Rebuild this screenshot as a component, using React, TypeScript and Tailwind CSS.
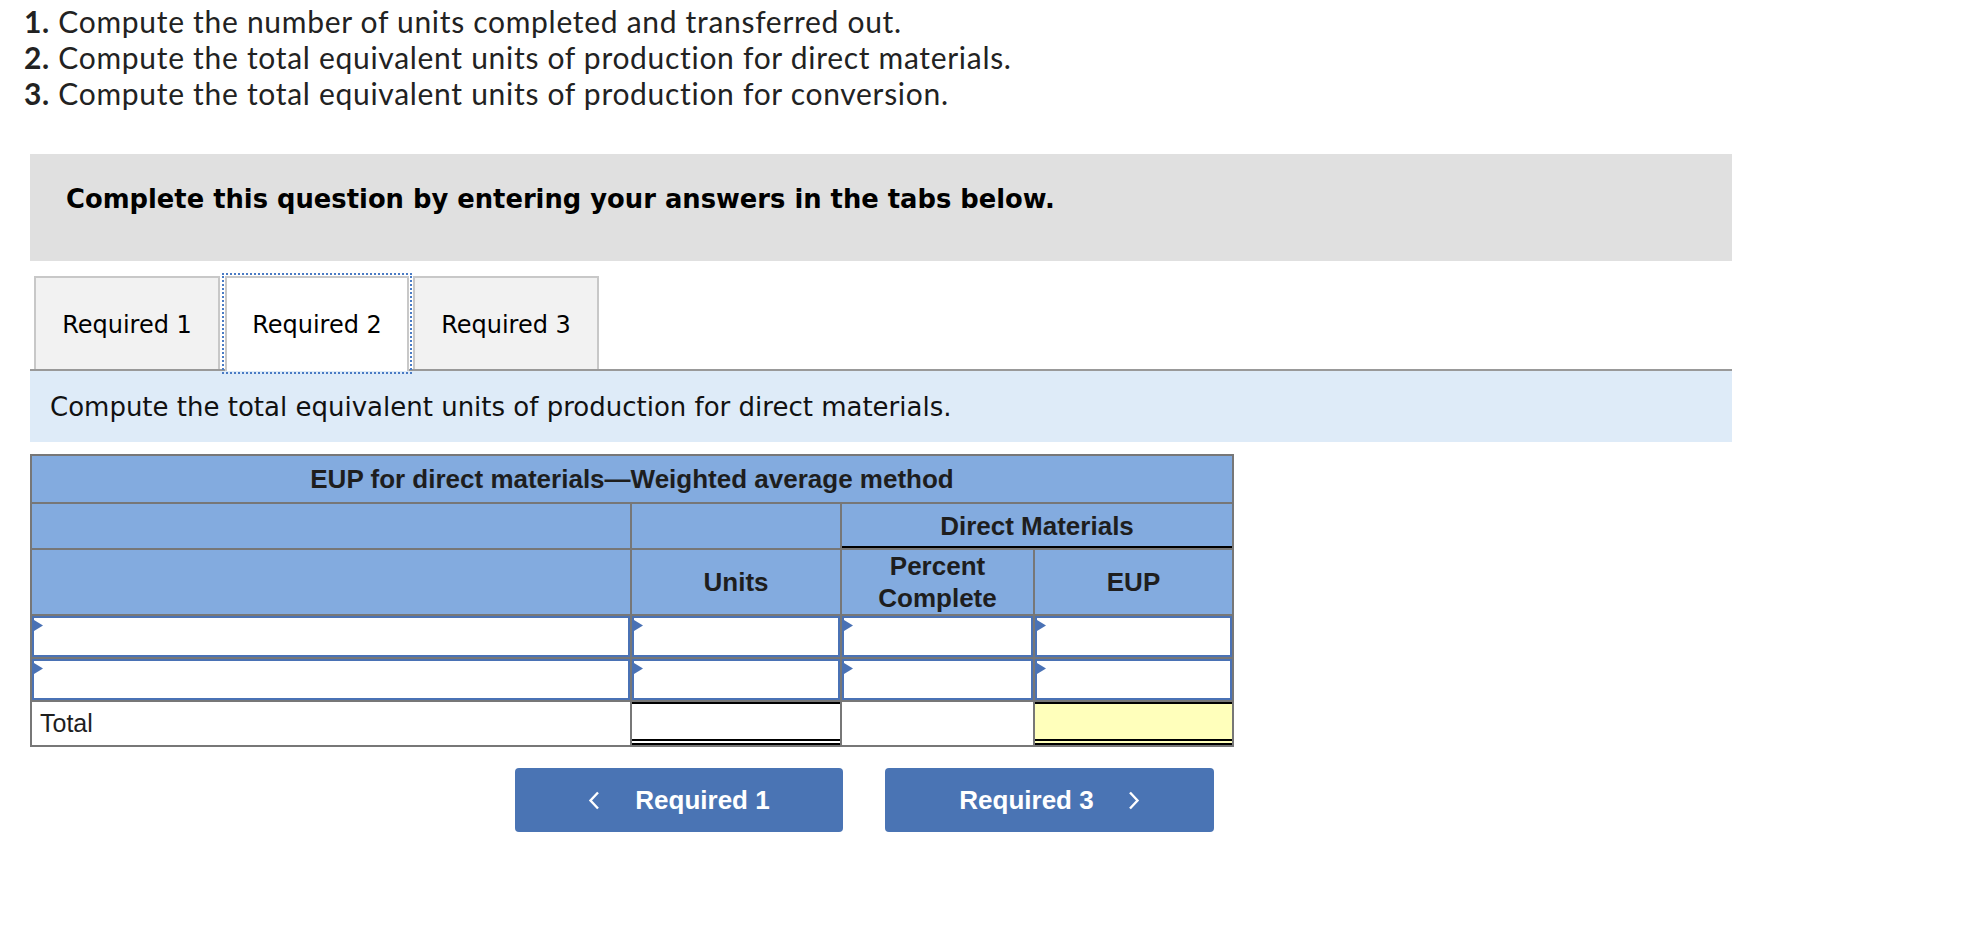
import React from "react";

const blue = "bg-[#83abdf]";

function Tri() {
  return (
    <svg className="absolute left-0 top-[2px]" width="9" height="11" viewBox="0 0 9 11">
      <polygon points="0,0 9,5.5 0,11" fill="#4a72b5" />
    </svg>
  );
}

function InputCell() {
  return (
    <div className="relative h-[41px] bg-white border-2 border-[#4a72b5]">
      <Tri />
    </div>
  );
}

function Chevron({ dir }: { dir: "left" | "right" }) {
  return (
    <svg width="12" height="19" viewBox="0 0 12 19" className="shrink-0">
      {dir === "left" ? (
        <polyline points="10,1.5 2.5,9.5 10,17.5" fill="none" stroke="white" strokeWidth="2.4" />
      ) : (
        <polyline points="2,1.5 9.5,9.5 2,17.5" fill="none" stroke="white" strokeWidth="2.4" />
      )}
    </svg>
  );
}

export default function App() {
  return (
    <div className="min-h-[928px] w-[1968px] bg-white">
      <div className="pt-[3px] pl-[24px] font-['Lato',sans-serif] text-[30px] leading-[36px] tracking-[0.7px] text-[#222]">
        <div>
          <span className="font-bold">1.</span> Compute the number of units completed and transferred out.
        </div>
        <div>
          <span className="font-bold">2.</span> Compute the total equivalent units of production for direct materials.
        </div>
        <div>
          <span className="font-bold">3.</span> Compute the total equivalent units of production for conversion.
        </div>
      </div>

      <div className="ml-[30px] w-[1702px]">
        <div className="mt-[43px] h-[107px] bg-[#e0e0e0] flex items-center pl-[36px] pb-[16px]">
          <span className="font-['DejaVu_Sans',sans-serif] font-bold text-[25.8px] text-black">
            Complete this question by entering your answers in the tabs below.
          </span>
        </div>

        <div className="mt-[15px] flex items-end pl-[4px] border-b-2 border-[#999] h-[95px] font-['DejaVu_Sans',sans-serif] text-[24px] text-black">
          <div className="w-[186px] h-[93px] bg-[#f2f2f2] border-2 border-b-0 border-[#c8c8c8] flex items-center justify-center pt-[3px]">
            Required 1
          </div>
          <div className="ml-[5px] w-[184px] -mb-[2px] h-[95px] bg-white border-2 border-b-0 border-[#c8c8c8] outline-2 outline-dotted outline-[#4a7bc4] outline-offset-[1px] flex items-center justify-center pt-[1px] relative z-10">
            Required 2
          </div>
          <div className="ml-[4px] w-[186px] h-[93px] bg-[#f2f2f2] border-2 border-b-0 border-[#c8c8c8] flex items-center justify-center pt-[3px]">
            Required 3
          </div>
        </div>

        <div className="h-[71px] bg-[#deebf8] flex items-center pl-[20px] pt-[2px] font-['DejaVu_Sans',sans-serif] text-[26px] text-[#111]">
          Compute the total equivalent units of production for direct materials.
        </div>

        <div className="mt-[12px] w-[1204px] grid grid-cols-[598px_208px_191px_197px] gap-[2px] bg-[#777] p-[2px] font-['Liberation_Sans',Arial,sans-serif] text-[#1e1e1e]">
          <div className={`col-span-4 h-[46px] ${blue} flex items-center justify-center font-bold text-[26px]`}>
            EUP for direct materials—Weighted average method
          </div>

          <div className={`h-[44px] ${blue}`} />
          <div className={`${blue}`} />
          <div className={`col-span-2 ${blue} border-b-2 border-black flex items-center justify-center font-bold text-[26px] pt-[2px]`}>
            Direct Materials
          </div>

          <div className={`h-[64px] ${blue}`} />
          <div className={`${blue} flex items-center justify-center font-bold text-[26px]`}>Units</div>
          <div className={`${blue} flex items-center justify-center text-center font-bold text-[26px] leading-[32px]`}>
            Percent
            <br />
            Complete
          </div>
          <div className={`${blue} flex items-center justify-center font-bold text-[26px]`}>EUP</div>

          <InputCell />
          <InputCell />
          <InputCell />
          <InputCell />

          <InputCell />
          <InputCell />
          <InputCell />
          <InputCell />

          <div className="h-[43px] bg-white flex items-center pl-[8px] text-[25px]">Total</div>
          <div className="bg-white border-t-2 border-black border-b-[6px] border-double" />
          <div className="bg-white" />
          <div className="bg-[#ffffbb] border-t-2 border-black border-b-[6px] border-double" />
        </div>

        <div className="mt-[21px] flex pl-[485px] gap-[42px] font-['Liberation_Sans',Arial,sans-serif] font-bold text-[26px] text-white">
          <div className="w-[328px] h-[64px] rounded-[4px] bg-[#4a74b4] flex items-center justify-center gap-[35px]">
            <Chevron dir="left" />
            <span>Required 1</span>
          </div>
          <div className="w-[329px] h-[64px] rounded-[4px] bg-[#4a74b4] flex items-center justify-center gap-[34px]">
            <span>Required 3</span>
            <Chevron dir="right" />
          </div>
        </div>
      </div>
    </div>
  );
}
